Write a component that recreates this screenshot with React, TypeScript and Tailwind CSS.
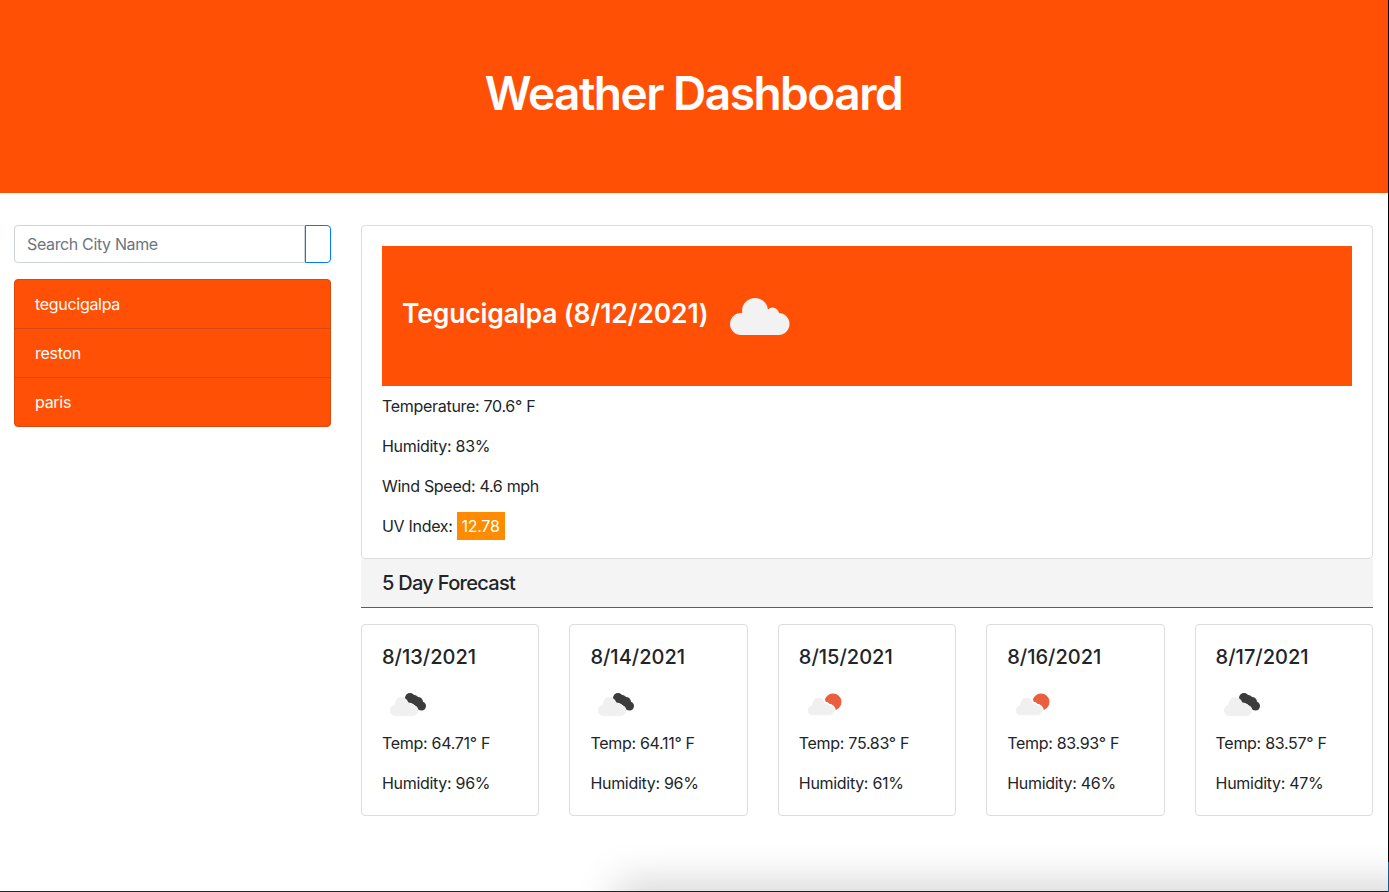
const cities = ['tegucigalpa', 'reston', 'paris'];

const forecast = [
  { date: '8/13/2021', temp: '64.71', humidity: '96%', sun: '#3c3c3c', night: true },
  { date: '8/14/2021', temp: '64.11', humidity: '96%', sun: '#3c3c3c', night: true },
  { date: '8/15/2021', temp: '75.83', humidity: '61%', sun: '#ea5f3f', night: false },
  { date: '8/16/2021', temp: '83.93', humidity: '46%', sun: '#ea5f3f', night: false },
  { date: '8/17/2021', temp: '83.57', humidity: '47%', sun: '#3c3c3c', night: true },
];

function BigCloud() {
  return (
    <svg width="60" height="38" viewBox="0 0 60 38" className="ml-[21px] mt-[2px]">
      <g fill="#f2f2f2">
        <circle cx="25" cy="13" r="13" />
        <circle cx="42.500" cy="16" r="6.500" />
        <circle cx="11" cy="26" r="11" />
        <circle cx="48.500" cy="26" r="11" />
        <rect x="11" y="15" width="38" height="22" />
      </g>
    </svg>
  );
}

function SmallCloud({ color, night }: { color: string; night: boolean }) {
  return (
    <svg width="50" height="30" viewBox="0 0 50 30" className="ml-[7px]">
      {night ? (
        <g fill={color}>
          <circle cx="21" cy="9" r="5" />
          <circle cx="25" cy="10.500" r="4.500" />
          <circle cx="29" cy="13" r="5" />
          <circle cx="32.500" cy="17" r="4.500" />
        </g>
      ) : (
        <circle cx="27" cy="13" r="8.500" fill={color} />
      )}
      <path
        fill="#f0f0f0"
        stroke="#fff"
        strokeWidth={night ? 0 : 1.500}
        d="M7 27C3.500 27 1 24.500 1 21.500C1 18.500 3 16.500 5.500 16C6 11.500 8.500 8 12 8C15.500 8 18.500 10.500 19.500 14C20.500 13.500 22 14 23 15.500C26 15.500 29 18 29 21.500C29 24.500 26.500 27 23.500 27Z"
      />
    </svg>
  );
}

export default function App() {
  return (
    <div className="relative min-h-[892px] overflow-hidden bg-white font-['Inter','Liberation_Sans',sans-serif] text-[16px] leading-[24px] tracking-[-0.3px] text-[#212529]">
      <header className="flex h-[193px] items-center justify-center bg-[#ff5005] pb-[6px] pr-[2px]">
        <h1 className="text-[46px] font-semibold leading-[53px] tracking-[-1.5px] text-white">Weather Dashboard</h1>
      </header>

      <main className="flex items-start gap-[30px] pl-[14px] pr-[16px] pt-[32px]">
        <aside className="w-[317px] shrink-0">
          <div className="flex h-[38px]">
            <input
              readOnly
              placeholder="Search City Name"
              className="min-w-0 flex-1 rounded-l-[4px] border border-[#ced4da] px-3 tracking-[-0.36px] text-[#212529] placeholder:text-[#6c757d]"
            />
            <button aria-label="Search" className="w-[26px] rounded-r-[4px] border border-[#007bff] bg-white" />
          </div>
          <ul className="mt-[16px] overflow-hidden rounded-[4px] border border-[#d9480f] bg-[#ff5005] text-white">
            {cities.map((city, i) => (
              <li key={city} className={i > 0 ? 'h-[49px] border-t border-[#d9480f] px-5 pt-[12px]' : 'h-[48px] px-5 pt-[12px]'}>
                {city}
              </li>
            ))}
          </ul>
        </aside>

        <section className="min-w-0 flex-1">
          <div className="h-[334px] rounded-[4px] border border-[#dcdcdc] px-5 pt-5">
            <div className="flex h-[140px] items-center bg-[#ff5005] px-5 text-white">
              <h2 className="mb-[6px] text-[26.500px] font-semibold tracking-[-0.16px]">Tegucigalpa (8/12/2021)</h2>
              <BigCloud />
            </div>
            <p className="mb-4 mt-2">Temperature: 70.6° F</p>
            <p className="mb-4">Humidity: 83%</p>
            <p className="mb-4">Wind Speed: 4.6 mph</p>
            <p className="flex h-[24px] items-center">
              UV Index:
              <span className="ml-[4px] flex h-[28px] items-center bg-[#ff8c00] px-[5px] text-white">12.78</span>
            </p>
          </div>

          <div className="flex h-[49px] items-center border-b border-[#5a5f64] bg-[#f4f4f4] px-[21px] text-[20px] font-medium tracking-[-0.7px]">
            5 Day Forecast
          </div>

          <div className="mt-[16px] grid grid-cols-5 gap-[30px]">
            {forecast.map((day) => (
              <div key={day.date} className="h-[192px] rounded-[4px] border border-[#dcdcdc] px-5 pt-5">
                <h3 className="text-[20px] font-medium leading-[24px] tracking-normal">{day.date}</h3>
                <div className="mt-[20px] h-[30px]">
                  <SmallCloud color={day.sun} night={day.night} />
                </div>
                <p className="mb-4 mt-[12px]">Temp: {day.temp}° F</p>
                <p>Humidity: {day.humidity}</p>
              </div>
            ))}
          </div>
        </section>
      </main>

      {/* window shadow along the bottom edge */}
      <div className="absolute bottom-[-30px] left-[626px] right-[-40px] h-[30px] shadow-[0_0_40px_10px_rgba(0,0,0,0.17)]" />
      <div className="absolute bottom-0 left-0 right-0 h-px bg-[#222]" />
      <div className="absolute bottom-0 right-0 top-0 w-px bg-black" />
      <div className="absolute bottom-0 right-0 h-[30px] w-px bg-[#1b5b8f]" />
    </div>
  );
}
